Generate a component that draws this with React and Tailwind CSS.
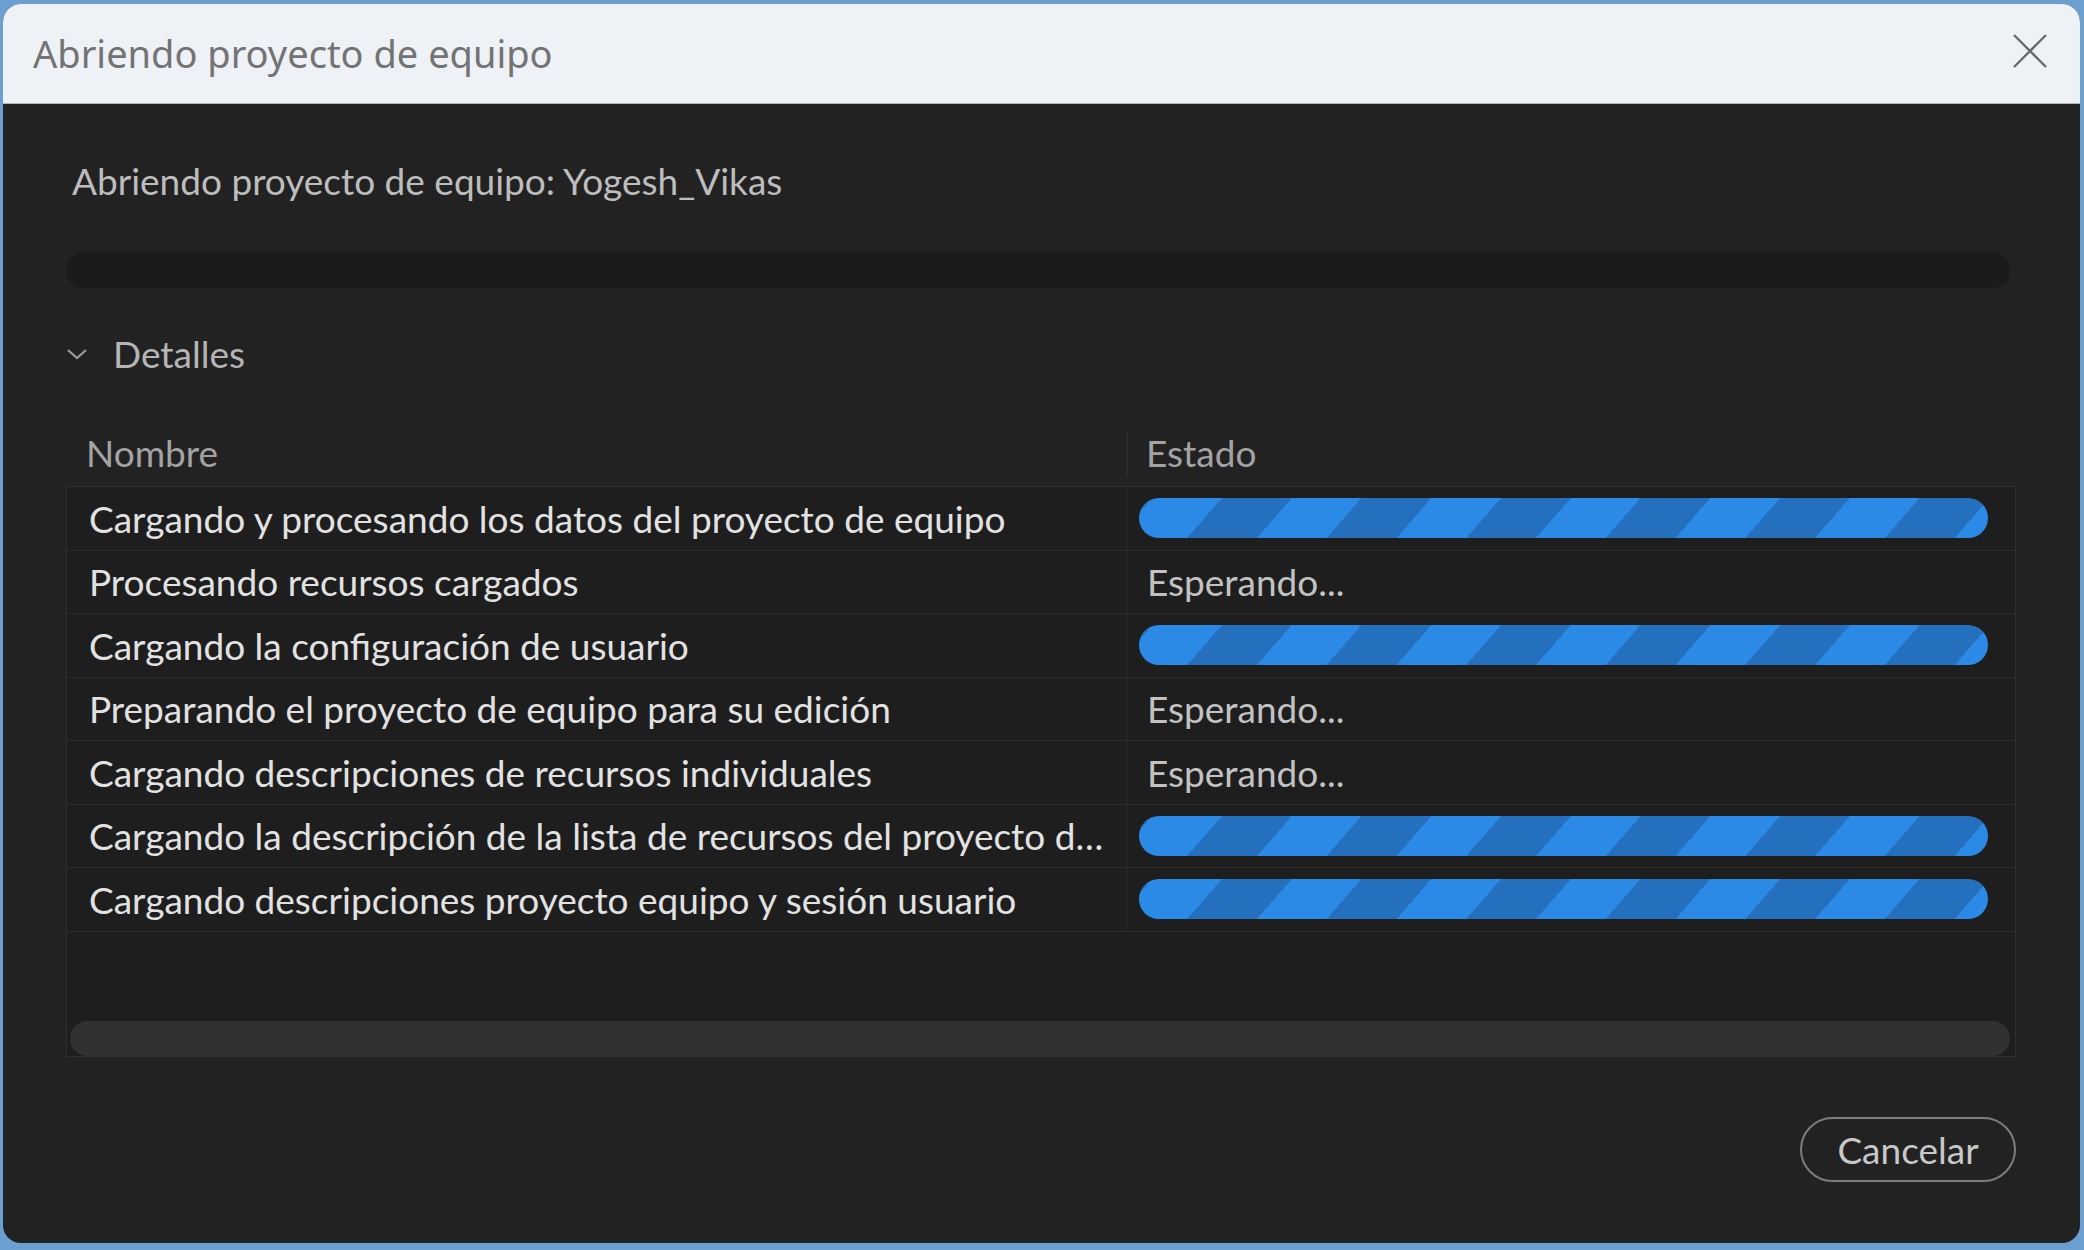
import React from "react";

const rows = [
  { name: "Cargando y procesando los datos del proyecto de equipo", busy: true },
  { name: "Procesando recursos cargados", busy: false },
  { name: "Cargando la configuración de usuario", busy: true },
  { name: "Preparando el proyecto de equipo para su edición", busy: false },
  { name: "Cargando descripciones de recursos individuales", busy: false },
  {
    name: "Cargando la descripción de la lista de recursos del proyecto de equipo",
    busy: true,
  },
  { name: "Cargando descripciones proyecto equipo y sesión usuario", busy: true },
];

const StripedBar = () => (
  <div className="h-[40px] w-full rounded-full bg-[repeating-linear-gradient(131deg,#2570be_0px,#2570be_10px,#2b8ae6_10px,#2b8ae6_62.6px,#2570be_62.6px,#2570be_105.3px)]"></div>
);

const App = () => {
  return (
    <div className="w-[2084px] h-[1250px] bg-[#6b9fd1] pt-[4px] pl-[3px] pr-[4px] pb-[7px] flex font-[Lato,sans-serif]">
      <div className="flex-1 flex flex-col rounded-[18px] overflow-hidden bg-[#222222]">
        {/* Title bar */}
        <div className="h-[100px] shrink-0 bg-[#eef2f7] border-b border-[#b4b4b4] flex items-center justify-between pl-[30px] pr-[33px]">
          <span className="font-['Noto_Sans',sans-serif] text-[38px] text-[#737373]">
            Abriendo proyecto de equipo
          </span>
          <svg width="34" height="34" viewBox="0 0 34 34" className="mb-[6px]">
            <path d="M1 1 L33 33 M33 1 L1 33" stroke="#6a6a6a" strokeWidth="2.4" fill="none" />
          </svg>
        </div>

        {/* Body */}
        <div className="flex-1 flex flex-col pl-[63px] pr-[64px] pt-[55px]">
          <p className="ml-[6px] text-[37px] leading-[44px] text-[#bdbdbd]">
            Abriendo proyecto de equipo: Yogesh_Vikas
          </p>

          {/* Overall progress track */}
          <div className="mt-[49px] mr-[6px] h-[36px] rounded-full bg-[#1b1b1b]"></div>

          {/* Details toggle */}
          <div className="mt-[44px] h-[44px] flex items-center">
            <svg width="22" height="12" viewBox="0 0 22 12">
              <path d="M2 2 L11 10 L20 2" stroke="#9a9a9a" strokeWidth="2.2" fill="none" />
            </svg>
            <span className="ml-[25px] text-[37px] leading-[44px] text-[#b5b5b5]">Detalles</span>
          </div>

          {/* Table header */}
          <div className="mt-[44px] h-[66px] flex items-center">
            <div className="w-[1061px] pl-[20px] text-[37px] text-[#a3a3a3]">Nombre</div>
            <div className="w-px h-[45px] bg-[#303030]"></div>
            <div className="pl-[18px] text-[37px] text-[#a3a3a3]">Estado</div>
          </div>

          {/* Table body */}
          <div className="h-[571px] flex flex-col border border-[#2f2f2f] bg-[#1e1e1e]">
            {rows.map((row) => (
              <div key={row.name} className="h-[63.5px] flex border-b border-[#2c2c2c]">
                <div className="w-[1060px] border-r border-[#2c2c2c] pl-[22px] pr-[14px] flex items-center min-w-0">
                  <span className="truncate text-[37px] text-[#e2e2e2]">{row.name}</span>
                </div>
                <div className="flex-1 pl-[12px] pr-[27px] flex items-center">
                  {row.busy ? (
                    <StripedBar />
                  ) : (
                    <span className="pl-[8px] text-[37px] text-[#c2c2c2]">Esperando...</span>
                  )}
                </div>
              </div>
            ))}
            <div className="flex-1"></div>
            {/* Horizontal scrollbar */}
            <div className="ml-[3px] mr-[5px] h-[35px] rounded-full bg-[#313131]"></div>
          </div>

          {/* Footer */}
          <div className="mt-[60px] flex justify-end">
            <button className="w-[216px] h-[65px] border-2 border-[#7d7d7d] rounded-full text-[37px] text-[#c8c8c8]">
              Cancelar
            </button>
          </div>
        </div>
      </div>
    </div>
  );
};

export default App;
